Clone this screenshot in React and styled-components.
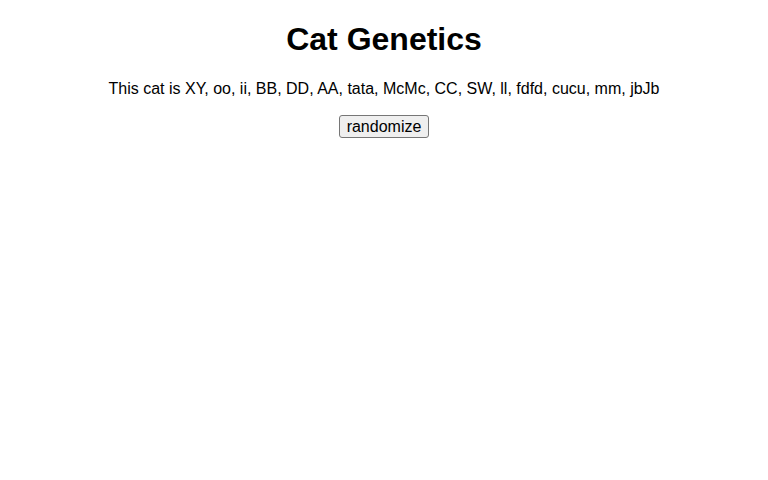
import React from "react";
import styled, { createGlobalStyle } from "styled-components";

const Global = createGlobalStyle`
  html, body { margin: 0; padding: 0; background: #ffffff; }
  body { font-family: "Liberation Sans", Arial, sans-serif; color: #000; }
`;

const Page = styled.main`
  text-align: center;
`;

const Title = styled.h1`
  font-size: 32px;
  font-weight: bold;
  margin: 21.44px 0;
`;

const Genotype = styled.p`
  font-size: 16px;
  margin: 16px 0;
`;

const Button = styled.button`
  font-family: "Liberation Sans", Arial, sans-serif;
  font-size: 16px;
  color: #000;
  background: #efefef;
  border: 1px solid #767676;
  border-radius: 3px;
  padding: 2px 7px 1px;
  margin-top: 1px;
  cursor: pointer;
`;

export default function App() {
  return (
    <Page>
      <Global />
      <Title>Cat Genetics</Title>
      <Genotype>
        This cat is XY, oo, ii, BB, DD, AA, tata, McMc, CC, SW, ll, fdfd, cucu, mm, jbJb
      </Genotype>
      <Button>randomize</Button>
    </Page>
  );
}
